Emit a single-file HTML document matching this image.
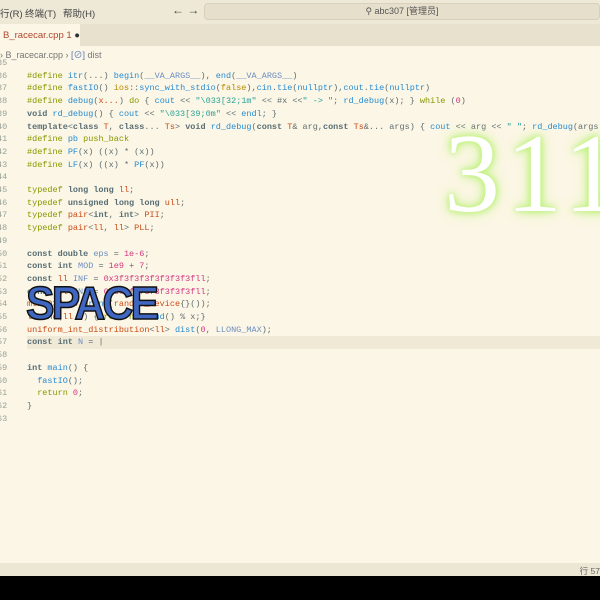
<!DOCTYPE html>
<html><head><meta charset="utf-8"><style>
*{margin:0;padding:0;box-sizing:border-box}
body{width:600px;height:600px;overflow:hidden;background:#fbf6e5;position:relative;font-family:"Liberation Sans","Noto Sans CJK SC",sans-serif}
.title{position:absolute;left:0;top:0;width:600px;height:24px;background:#eee8d6;font-size:9.5px;color:#444}
.title span{position:absolute;top:6px}
.search{position:absolute;left:204px;top:3px;width:396px;height:17px;background:#e6dfcb;border:1px solid #d8d0bb;border-radius:4px;font-size:9px;color:#555;text-align:center;line-height:15px}
.tabs{position:absolute;left:0;top:24px;width:600px;height:22px;background:#e8e1ce}
.tab{position:absolute;left:0;top:0;width:80px;height:22px;background:#fbf6e5;font-size:9.5px;color:#b3452f;padding:6px 0 0 3px;white-space:nowrap}
.bc{position:absolute;left:0;top:48px;font-size:9px;color:#777}
.code{position:absolute;left:0;top:57px;width:600px;font-family:"Liberation Mono",monospace;font-size:8.5px;line-height:12.7px;color:#5f6d73;white-space:pre}
.ln{display:inline-block;width:30px;color:#9aa29a;text-align:left;margin-left:-3px}
.p{color:#859900}.f{color:#268bd2}.s{color:#2aa198}.n{color:#d33682}.t{color:#b58900}.b{font-weight:bold;color:#586e75}.v{color:#6c8ec2}.r{color:#cb4b16}
.cur{background:#efe9d6}
.status{position:absolute;left:0;top:563px;width:600px;height:13px;background:#ece6d4;font-size:8.5px;color:#666}
.black{position:absolute;left:0;top:576px;width:600px;height:24px;background:#000}
.big{position:absolute;left:444px;top:118px;font-family:"Liberation Serif",serif;font-size:112px;line-height:112px;color:#fff;letter-spacing:6px;text-shadow:0 0 4px #c8f58a,0 0 8px #b0ee6a,0 0 14px #c8f58a}
.space{position:absolute;left:26px;top:280px;font-family:"Liberation Sans",sans-serif;font-weight:bold;font-size:46px;color:#3f66c0;letter-spacing:-3px;-webkit-text-stroke:1.5px #111;transform-origin:0 0;transform:scale(0.93,1.0);line-height:46px}
</style></head><body>
<div class="title"><span style="left:0">行(R)</span><span style="left:25px">终端(T)</span><span style="left:63px">帮助(H)</span><span style="left:172px;font-size:12px;top:3px">← →</span>
<div class="search">⚲ abc307 [管理员]</div></div>
<div class="tabs"><div class="tab">B_racecar.cpp 1 <span style="color:#333">●</span></div></div>
<div class="bc">› B_racecar.cpp › <span style="color:#5577bb">[⊘]</span> dist</div>
<div class="code"><span class="ln">35</span>
<span class="ln">36</span><span class="p">#define</span> <span class="f">itr</span>(...) <span class="f">begin</span>(<span class="v">__VA_ARGS__</span>), <span class="f">end</span>(<span class="v">__VA_ARGS__</span>)
<span class="ln">37</span><span class="p">#define</span> <span class="f">fastIO</span>() <span class="t">ios</span>::<span class="f">sync_with_stdio</span>(<span class="t">false</span>),<span class="f">cin</span>.<span class="f">tie</span>(<span class="f">nullptr</span>),<span class="f">cout</span>.<span class="f">tie</span>(<span class="f">nullptr</span>)
<span class="ln">38</span><span class="p">#define</span> <span class="f">debug</span>(<span class="r">x</span><span class="r">...</span>) <span class="p">do</span> { <span class="f">cout</span> &lt;&lt; <span class="s">"\033[32;1m"</span> &lt;&lt; #x &lt;&lt;<span class="s">" -&gt; "</span>; <span class="f">rd_debug</span>(x); } <span class="p">while</span> (<span class="n">0</span>)
<span class="ln">39</span><span class="b">void</span> <span class="f">rd_debug</span>() { <span class="f">cout</span> &lt;&lt; <span class="s">"\033[39;0m"</span> &lt;&lt; <span class="f">endl</span>; }
<span class="ln">40</span><span class="b">template</span>&lt;<span class="b">class</span> <span class="r">T</span>, <span class="b">class</span>... <span class="r">Ts</span>&gt; <span class="b">void</span> <span class="f">rd_debug</span>(<span class="b">const</span> <span class="r">T</span>&amp; arg,<span class="b">const</span> <span class="r">Ts</span>&amp;... args) { <span class="f">cout</span> &lt;&lt; arg &lt;&lt; <span class="s">" "</span>; <span class="f">rd_debug</span>(args...
<span class="ln">41</span><span class="p">#define</span> <span class="f">pb</span> <span class="p">push_back</span>
<span class="ln">42</span><span class="p">#define</span> <span class="f">PF</span>(x) ((x) * (x))
<span class="ln">43</span><span class="p">#define</span> <span class="f">LF</span>(x) ((x) * <span class="f">PF</span>(x))
<span class="ln">44</span>
<span class="ln">45</span><span class="p">typedef</span> <span class="b">long long</span> <span class="r">ll</span>;
<span class="ln">46</span><span class="p">typedef</span> <span class="b">unsigned long long</span> <span class="r">ull</span>;
<span class="ln">47</span><span class="p">typedef</span> <span class="r">pair</span>&lt;<span class="b">int</span>, <span class="b">int</span>&gt; <span class="r">PII</span>;
<span class="ln">48</span><span class="p">typedef</span> <span class="r">pair</span>&lt;<span class="r">ll</span>, <span class="r">ll</span>&gt; <span class="r">PLL</span>;
<span class="ln">49</span>
<span class="ln">50</span><span class="b">const double</span> <span class="v">eps</span> = <span class="n">1e-6</span>;
<span class="ln">51</span><span class="b">const int</span> <span class="v">MOD</span> = <span class="n">1e9</span> + <span class="n">7</span>;
<span class="ln">52</span><span class="b">const</span> <span class="r">ll</span> <span class="v">INF</span> = <span class="n">0x3f3f3f3f3f3f3f3fll</span>;
<span class="ln">53</span><span class="b">const</span> <span class="r">ll</span> <span class="v">INF</span> = <span class="n">0x3f3f3f3f3f3f3f3fll</span>;
<span class="ln">54</span><span class="r">mt19937_64</span> <span class="f">mrand</span>(<span class="r">random_device</span>{}());
<span class="ln">55</span><span class="r">ll</span> <span class="f">rnd</span>(<span class="r">ll</span> x) { <span class="p">return</span> <span class="f">mrand</span>() % x;}
<span class="ln">56</span><span class="r">uniform_int_distribution</span>&lt;<span class="r">ll</span>&gt; <span class="f">dist</span>(<span class="n">0</span>, <span class="v">LLONG_MAX</span>);
<span class="ln">57</span><span class="cur" style="display:inline-block;width:580px"><span class="b">const int</span> <span class="v">N</span> = |</span>
<span class="ln">58</span>
<span class="ln">59</span><span class="b">int</span> <span class="f">main</span>() {
<span class="ln">60</span>  <span class="f">fastIO</span>();
<span class="ln">61</span>  <span class="p">return</span> <span class="n">0</span>;
<span class="ln">62</span>}
<span class="ln">63</span></div>
<div class="space">SPACE</div>
<div class="big">311</div>
<div class="status"><span style="position:absolute;right:0;top:2px">行 57</span></div>
<div class="black"></div>
</body></html>
